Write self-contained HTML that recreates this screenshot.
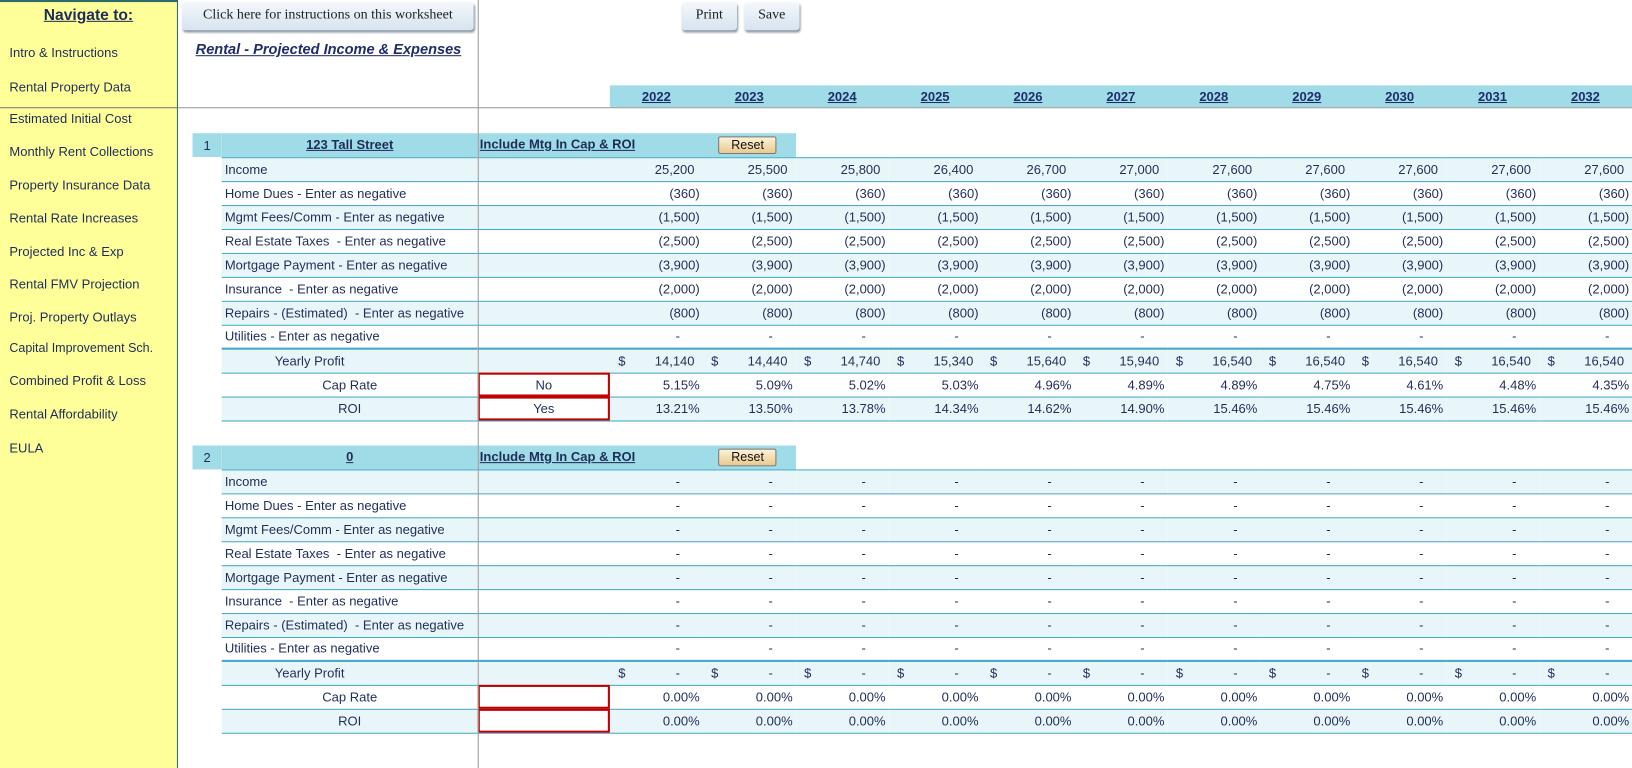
<!DOCTYPE html>
<html><head><meta charset="utf-8"><style>
*{box-sizing:border-box;margin:0;padding:0}
html,body{width:1632px;height:738px;overflow:hidden;background:#fff}
#wrap{position:absolute;left:0;top:0;width:1568px;height:710px;transform:scale(1.0408);transform-origin:0 0;font-family:"Comic Sans MS","Liberation Sans",sans-serif;font-size:12.5px;color:#1f2d5a}
#side{position:absolute;left:0;top:0;width:171px;height:738px;background:#ffff99;border-right:1px solid #2f6b6b;border-top:2px solid #2f6b6b}
#side div{position:absolute;left:9px;white-space:nowrap;color:#1f2d5a}
#side .nav{left:0;width:170px;text-align:center;font-family:"Liberation Sans",sans-serif;font-weight:bold;font-size:15px;text-decoration:underline;top:4px}
.btn{position:absolute;top:2px;height:27px;border-radius:3px;background:linear-gradient(#f4f8fc,#d6e3ef);box-shadow:1px 2px 2px #8a96a3;font-family:"Liberation Serif",serif;font-size:13.5px;color:#222;text-align:center;line-height:24px}
#title{position:absolute;left:188px;top:39px;font-weight:bold;font-style:italic;font-size:14px;text-decoration:underline;color:#1f2d6a}
#years{position:absolute;left:586px;top:82px;width:982px;height:21px;background:#a0dce7;display:flex}
#years div{width:89.3px;text-align:center;font-family:"Liberation Sans",sans-serif;font-weight:bold;font-size:12.5px;text-decoration:underline;line-height:23px;color:#1f2d6a}
.vl{position:absolute;left:459px;top:0;width:1px;height:738px;background:#9a9a9a}
.hl{position:absolute;left:171px;top:103px;width:1461px;height:1px;background:#9a9a9a}
.hl2{position:absolute;left:0;top:103px;width:171px;height:1px;background:#777}
table{position:absolute;left:185px;border-collapse:collapse;table-layout:fixed;width:1383px}
td{height:23px;padding:0 8px 0 0;text-align:right;border-bottom:1px solid #44a8c8;white-space:nowrap;overflow:hidden;vertical-align:middle}
td.lb{text-align:left;padding-left:3px}
tr.a td{background:#e9f6f9}
td.ng{padding-right:3px}
td.d{padding-right:22px}
tr.hd td{background:#a0dce7;font-weight:bold}
tr.hd td.w{background:#fff}
u{text-decoration:underline}
.rs{display:inline-block;vertical-align:middle;margin-left:80px;width:56px;height:17px;border:1px solid #777;border-radius:2px;background:linear-gradient(#fdf3d8,#e9c98e);font-family:"Liberation Sans",sans-serif;font-weight:normal;font-size:12px;text-align:center;line-height:15px;color:#111}
tr.ut td{border-bottom:2px solid #44a8c8}
table tr td.n{border:none;text-align:center;padding:0;background:#fff}
table tr.hd td.n{background:#a0dce7}
td.pr span{float:left;padding-left:8px}
td.red{outline:2px solid #c00000;outline-offset:-2px;text-align:center;padding:0}
</style></head><body><div id="wrap">
<div id="side">
<div class="nav">Navigate to:</div>
<div style="top:42px">Intro &amp; Instructions</div>
<div style="top:75px">Rental Property Data</div>
<div style="top:105px">Estimated Initial Cost</div>
<div style="top:137px">Monthly Rent Collections</div>
<div style="top:169px">Property Insurance Data</div>
<div style="top:201px">Rental Rate Increases</div>
<div style="top:233px">Projected Inc &amp; Exp</div>
<div style="top:264px">Rental FMV Projection</div>
<div style="top:296px">Proj. Property Outlays</div>
<div style="top:325px;font-size:12px">Capital Improvement Sch.</div>
<div style="top:357px">Combined Profit &amp; Loss</div>
<div style="top:389px">Rental Affordability</div>
<div style="top:422px">EULA</div>
</div>
<div class="hl2"></div>
<div class="btn" style="left:175px;width:280px">Click here for instructions on this worksheet</div>
<div class="btn" style="left:655px;width:53px">Print</div>
<div class="btn" style="left:715px;width:53px">Save</div>
<div id="title">Rental - Projected Income &amp; Expenses</div>
<div id="years"><div>2022</div><div>2023</div><div>2024</div><div>2025</div><div>2026</div><div>2027</div><div>2028</div><div>2029</div><div>2030</div><div>2031</div><div>2032</div></div>
<div class="hl"></div>

<table style="top:128px">
<colgroup><col style="width:28px"><col style="width:246px"><col style="width:127px"><col span="11" style="width:89.3px"></colgroup>
<tr class="hd"><td class="n" style="font-weight:normal">1</td><td style="text-align:center;padding:0"><u>123 Tall Street</u></td><td colspan="3" style="text-align:left;padding-left:2px"><u>Include Mtg In Cap &amp; ROI</u><span class="rs">Reset</span></td><td class="w" colspan="9"></td></tr>
<tr class="a"><td class="n"></td><td class="lb">Income</td><td></td><td>25,200</td><td>25,500</td><td>25,800</td><td>26,400</td><td>26,700</td><td>27,000</td><td>27,600</td><td>27,600</td><td>27,600</td><td>27,600</td><td>27,600</td></tr>
<tr><td class="n"></td><td class="lb">Home Dues - Enter as negative</td><td></td><td class="ng">(360)</td><td class="ng">(360)</td><td class="ng">(360)</td><td class="ng">(360)</td><td class="ng">(360)</td><td class="ng">(360)</td><td class="ng">(360)</td><td class="ng">(360)</td><td class="ng">(360)</td><td class="ng">(360)</td><td class="ng">(360)</td></tr>
<tr class="a"><td class="n"></td><td class="lb">Mgmt Fees/Comm - Enter as negative</td><td></td><td class="ng">(1,500)</td><td class="ng">(1,500)</td><td class="ng">(1,500)</td><td class="ng">(1,500)</td><td class="ng">(1,500)</td><td class="ng">(1,500)</td><td class="ng">(1,500)</td><td class="ng">(1,500)</td><td class="ng">(1,500)</td><td class="ng">(1,500)</td><td class="ng">(1,500)</td></tr>
<tr><td class="n"></td><td class="lb">Real Estate Taxes &nbsp;- Enter as negative</td><td></td><td class="ng">(2,500)</td><td class="ng">(2,500)</td><td class="ng">(2,500)</td><td class="ng">(2,500)</td><td class="ng">(2,500)</td><td class="ng">(2,500)</td><td class="ng">(2,500)</td><td class="ng">(2,500)</td><td class="ng">(2,500)</td><td class="ng">(2,500)</td><td class="ng">(2,500)</td></tr>
<tr class="a"><td class="n"></td><td class="lb">Mortgage Payment - Enter as negative</td><td></td><td class="ng">(3,900)</td><td class="ng">(3,900)</td><td class="ng">(3,900)</td><td class="ng">(3,900)</td><td class="ng">(3,900)</td><td class="ng">(3,900)</td><td class="ng">(3,900)</td><td class="ng">(3,900)</td><td class="ng">(3,900)</td><td class="ng">(3,900)</td><td class="ng">(3,900)</td></tr>
<tr><td class="n"></td><td class="lb">Insurance &nbsp;- Enter as negative</td><td></td><td class="ng">(2,000)</td><td class="ng">(2,000)</td><td class="ng">(2,000)</td><td class="ng">(2,000)</td><td class="ng">(2,000)</td><td class="ng">(2,000)</td><td class="ng">(2,000)</td><td class="ng">(2,000)</td><td class="ng">(2,000)</td><td class="ng">(2,000)</td><td class="ng">(2,000)</td></tr>
<tr class="a"><td class="n"></td><td class="lb">Repairs - (Estimated) &nbsp;- Enter as negative</td><td></td><td class="ng">(800)</td><td class="ng">(800)</td><td class="ng">(800)</td><td class="ng">(800)</td><td class="ng">(800)</td><td class="ng">(800)</td><td class="ng">(800)</td><td class="ng">(800)</td><td class="ng">(800)</td><td class="ng">(800)</td><td class="ng">(800)</td></tr>
<tr class="ut"><td class="n"></td><td class="lb">Utilities - Enter as negative</td><td></td><td class="d">-</td><td class="d">-</td><td class="d">-</td><td class="d">-</td><td class="d">-</td><td class="d">-</td><td class="d">-</td><td class="d">-</td><td class="d">-</td><td class="d">-</td><td class="d">-</td></tr>
<tr class="a"><td class="n"></td><td class="lb" style="padding-left:51px">Yearly Profit</td><td></td><td class="pr"><span>$</span>14,140</td><td class="pr"><span>$</span>14,440</td><td class="pr"><span>$</span>14,740</td><td class="pr"><span>$</span>15,340</td><td class="pr"><span>$</span>15,640</td><td class="pr"><span>$</span>15,940</td><td class="pr"><span>$</span>16,540</td><td class="pr"><span>$</span>16,540</td><td class="pr"><span>$</span>16,540</td><td class="pr"><span>$</span>16,540</td><td class="pr"><span>$</span>16,540</td></tr>
<tr><td class="n"></td><td style="text-align:center;padding:0">Cap Rate</td><td class="red">No</td><td class="ng">5.15%</td><td class="ng">5.09%</td><td class="ng">5.02%</td><td class="ng">5.03%</td><td class="ng">4.96%</td><td class="ng">4.89%</td><td class="ng">4.89%</td><td class="ng">4.75%</td><td class="ng">4.61%</td><td class="ng">4.48%</td><td class="ng">4.35%</td></tr>
<tr class="a"><td class="n"></td><td style="text-align:center;padding:0">ROI</td><td class="red" style="background:#fff">Yes</td><td class="ng">13.21%</td><td class="ng">13.50%</td><td class="ng">13.78%</td><td class="ng">14.34%</td><td class="ng">14.62%</td><td class="ng">14.90%</td><td class="ng">15.46%</td><td class="ng">15.46%</td><td class="ng">15.46%</td><td class="ng">15.46%</td><td class="ng">15.46%</td></tr>
</table>

<table style="top:428px">
<colgroup><col style="width:28px"><col style="width:246px"><col style="width:127px"><col span="11" style="width:89.3px"></colgroup>
<tr class="hd"><td class="n" style="font-weight:normal">2</td><td style="text-align:center;padding:0"><u>0</u></td><td colspan="3" style="text-align:left;padding-left:2px"><u>Include Mtg In Cap &amp; ROI</u><span class="rs">Reset</span></td><td class="w" colspan="9"></td></tr>
<tr class="a"><td class="n"></td><td class="lb">Income</td><td></td><td class="d">-</td><td class="d">-</td><td class="d">-</td><td class="d">-</td><td class="d">-</td><td class="d">-</td><td class="d">-</td><td class="d">-</td><td class="d">-</td><td class="d">-</td><td class="d">-</td></tr>
<tr><td class="n"></td><td class="lb">Home Dues - Enter as negative</td><td></td><td class="d">-</td><td class="d">-</td><td class="d">-</td><td class="d">-</td><td class="d">-</td><td class="d">-</td><td class="d">-</td><td class="d">-</td><td class="d">-</td><td class="d">-</td><td class="d">-</td></tr>
<tr class="a"><td class="n"></td><td class="lb">Mgmt Fees/Comm - Enter as negative</td><td></td><td class="d">-</td><td class="d">-</td><td class="d">-</td><td class="d">-</td><td class="d">-</td><td class="d">-</td><td class="d">-</td><td class="d">-</td><td class="d">-</td><td class="d">-</td><td class="d">-</td></tr>
<tr><td class="n"></td><td class="lb">Real Estate Taxes &nbsp;- Enter as negative</td><td></td><td class="d">-</td><td class="d">-</td><td class="d">-</td><td class="d">-</td><td class="d">-</td><td class="d">-</td><td class="d">-</td><td class="d">-</td><td class="d">-</td><td class="d">-</td><td class="d">-</td></tr>
<tr class="a"><td class="n"></td><td class="lb">Mortgage Payment - Enter as negative</td><td></td><td class="d">-</td><td class="d">-</td><td class="d">-</td><td class="d">-</td><td class="d">-</td><td class="d">-</td><td class="d">-</td><td class="d">-</td><td class="d">-</td><td class="d">-</td><td class="d">-</td></tr>
<tr><td class="n"></td><td class="lb">Insurance &nbsp;- Enter as negative</td><td></td><td class="d">-</td><td class="d">-</td><td class="d">-</td><td class="d">-</td><td class="d">-</td><td class="d">-</td><td class="d">-</td><td class="d">-</td><td class="d">-</td><td class="d">-</td><td class="d">-</td></tr>
<tr class="a"><td class="n"></td><td class="lb">Repairs - (Estimated) &nbsp;- Enter as negative</td><td></td><td class="d">-</td><td class="d">-</td><td class="d">-</td><td class="d">-</td><td class="d">-</td><td class="d">-</td><td class="d">-</td><td class="d">-</td><td class="d">-</td><td class="d">-</td><td class="d">-</td></tr>
<tr class="ut"><td class="n"></td><td class="lb">Utilities - Enter as negative</td><td></td><td class="d">-</td><td class="d">-</td><td class="d">-</td><td class="d">-</td><td class="d">-</td><td class="d">-</td><td class="d">-</td><td class="d">-</td><td class="d">-</td><td class="d">-</td><td class="d">-</td></tr>
<tr class="a"><td class="n"></td><td class="lb" style="padding-left:51px">Yearly Profit</td><td></td><td class="pr d"><span>$</span>-</td><td class="pr d"><span>$</span>-</td><td class="pr d"><span>$</span>-</td><td class="pr d"><span>$</span>-</td><td class="pr d"><span>$</span>-</td><td class="pr d"><span>$</span>-</td><td class="pr d"><span>$</span>-</td><td class="pr d"><span>$</span>-</td><td class="pr d"><span>$</span>-</td><td class="pr d"><span>$</span>-</td><td class="pr d"><span>$</span>-</td></tr>
<tr><td class="n"></td><td style="text-align:center;padding:0">Cap Rate</td><td class="red"></td><td class="ng">0.00%</td><td class="ng">0.00%</td><td class="ng">0.00%</td><td class="ng">0.00%</td><td class="ng">0.00%</td><td class="ng">0.00%</td><td class="ng">0.00%</td><td class="ng">0.00%</td><td class="ng">0.00%</td><td class="ng">0.00%</td><td class="ng">0.00%</td></tr>
<tr class="a"><td class="n"></td><td style="text-align:center;padding:0">ROI</td><td class="red" style="background:#fff"></td><td class="ng">0.00%</td><td class="ng">0.00%</td><td class="ng">0.00%</td><td class="ng">0.00%</td><td class="ng">0.00%</td><td class="ng">0.00%</td><td class="ng">0.00%</td><td class="ng">0.00%</td><td class="ng">0.00%</td><td class="ng">0.00%</td><td class="ng">0.00%</td></tr>
</table>
<div class="vl"></div>
</div></body></html>
